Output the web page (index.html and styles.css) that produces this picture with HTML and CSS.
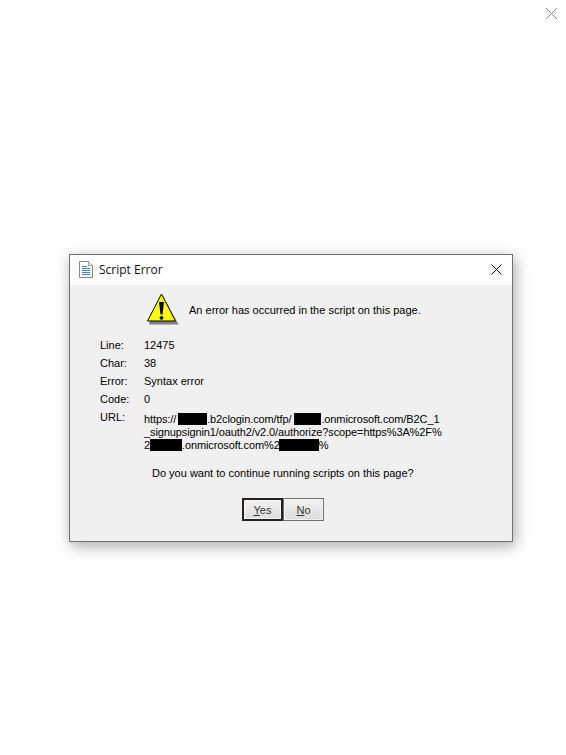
FILE: index.html
```html
<!DOCTYPE html>
<html lang="en">
<head>
<meta charset="utf-8">
<title>Script Error</title>
<link rel="stylesheet" href="styles.css">
</head>
<body>
<svg class="page-close" width="13" height="13" viewBox="0 0 13 13"><path d="M1 1L12 12M12 1L1 12" stroke="#8a8a8a" stroke-width="1" fill="none"/></svg>
<div class="dialog">
  <div class="titlebar">
    <svg class="doc-icon" width="14" height="17" viewBox="0 0 14 17">
      <path d="M.5.5H9.5L13.500 4.500V16.500H.5Z" fill="#fff" stroke="#7f8790"/>
      <path d="M9.5.5V4.500H13.500" fill="#e4e8ec" stroke="#9aa1a8"/>
      <path d="M3 5.500H8M3 7.500H11M3 9.500H11M3 11.500H11M3 13.500H11" stroke="#3f82c4" stroke-width="1" fill="none"/>
    </svg>
    <span class="title">Script Error</span>
    <svg class="close" width="11" height="11" viewBox="0 0 11 11"><path d="M.5.5L10.500 10.500M10.500.5L.5 10.500" stroke="#111" stroke-width="1" fill="none"/></svg>
  </div>
  <div class="content">
    <div class="headline">
      <svg class="warn" width="33" height="33" viewBox="0 0 33 33">
        <path d="M17 3L32.500 31.500H3L4 28Z" fill="#808080"/>
        <path d="M15.500 1L29.500 28H1.500Z" fill="#ffff00" stroke="#000" stroke-width="1" stroke-linejoin="round"/>
        <path d="M13 9H18L16.500 21.500H14.500Z" fill="#000"/>
        <circle cx="15.500" cy="24.800" r="1.900" fill="#000"/>
      </svg>
      <span>An error has occurred in the script on this page.</span>
    </div>
    <dl class="details">
      <div class="row"><dt>Line:</dt><dd>12475</dd></div>
      <div class="row"><dt>Char:</dt><dd>38</dd></div>
      <div class="row"><dt>Error:</dt><dd>Syntax error</dd></div>
      <div class="row"><dt>Code:</dt><dd>0</dd></div>
      <div class="row"><dt>URL:</dt><dd class="url">https://<span class="redact r1"></span>.b2clogin.com/tfp/<span class="redact r2"></span>.onmicrosoft.com/B2C_1<br>_signupsignin1/oauth2/v2.0/authorize?scope=https%3A%2F%<br>2<span class="redact r3"></span>.onmicrosoft.com%2<span class="redact r4"></span>%</dd></div>
    </dl>
    <p class="question">Do you want to continue running scripts on this page?</p>
    <div class="buttons">
      <button class="btn default"><u>Y</u>es</button>
      <button class="btn"><u>N</u>o</button>
    </div>
  </div>
</div>
</body>
</html>
```
FILE: styles.css
```css
html, body { margin: 0; padding: 0; background: #fff; height: 100%; overflow: hidden; }
body {
  font-family: "Liberation Sans", Arial, sans-serif;
  font-size: 11px;
  color: #000;
  padding: 254px 0 0 69px;
  box-sizing: border-box;
  position: relative;
}
.page-close { position: absolute; left: 545px; top: 7px; }
.dialog {
  width: 444px;
  height: 288px;
  box-sizing: border-box;
  border: 1px solid #707070;
  background: #f0f0f0;
  box-shadow: 2px 4px 14px rgba(0,0,0,.35);
  display: flex;
  flex-direction: column;
}
.titlebar {
  height: 30px;
  flex: none;
  background: #fff;
  display: flex;
  align-items: center;
  padding: 0 10px 0 9px;
}
.doc-icon { margin-right: 6px; margin-top: -2px; }
.title { font-family: "Open Sans", sans-serif; font-size: 12px; line-height: 16px; margin-top: -1px; color: #111; flex: 1; }
.close { margin-top: -2px; }
.content { flex: 1; display: flex; flex-direction: column; }
.headline { display: flex; align-items: center; height: 33px; margin: 8px 0 0 76px; }
.warn { margin-right: 10px; flex: none; }
.details { margin: 11px 0 0 30px; padding: 0; }
.row { display: flex; min-height: 18px; line-height: 13px; padding-top: 2px; box-sizing: border-box; }
dt { width: 44px; flex: none; }
dd { margin: 0; }
.url { white-space: nowrap; margin-top: 2px; letter-spacing: -0.11px; }
.redact { display: inline-block; background: #000; height: 12px; vertical-align: -2px; }
.r1 { width: 29px; margin-left: 2px; }
.r2 { width: 27px; margin-left: 3px; }
.r3 { width: 32px; }
.r4 { width: 40px; margin-left: -1px; }
.question { margin: 15px 0 0 82px; line-height: 13px; }
.buttons { display: flex; margin: 18px 0 0 172px; }
.btn {
  width: 41px;
  height: 23px;
  padding: 0;
  margin: 0;
  font: inherit;
  color: #333;
  border: 1px solid #707070;
  background: linear-gradient(#f2f2f2, #dcdcdc);
  box-shadow: inset 0 0 0 1px #f4f4f4;
}
.btn.default { border: 2px solid #222; }
```
